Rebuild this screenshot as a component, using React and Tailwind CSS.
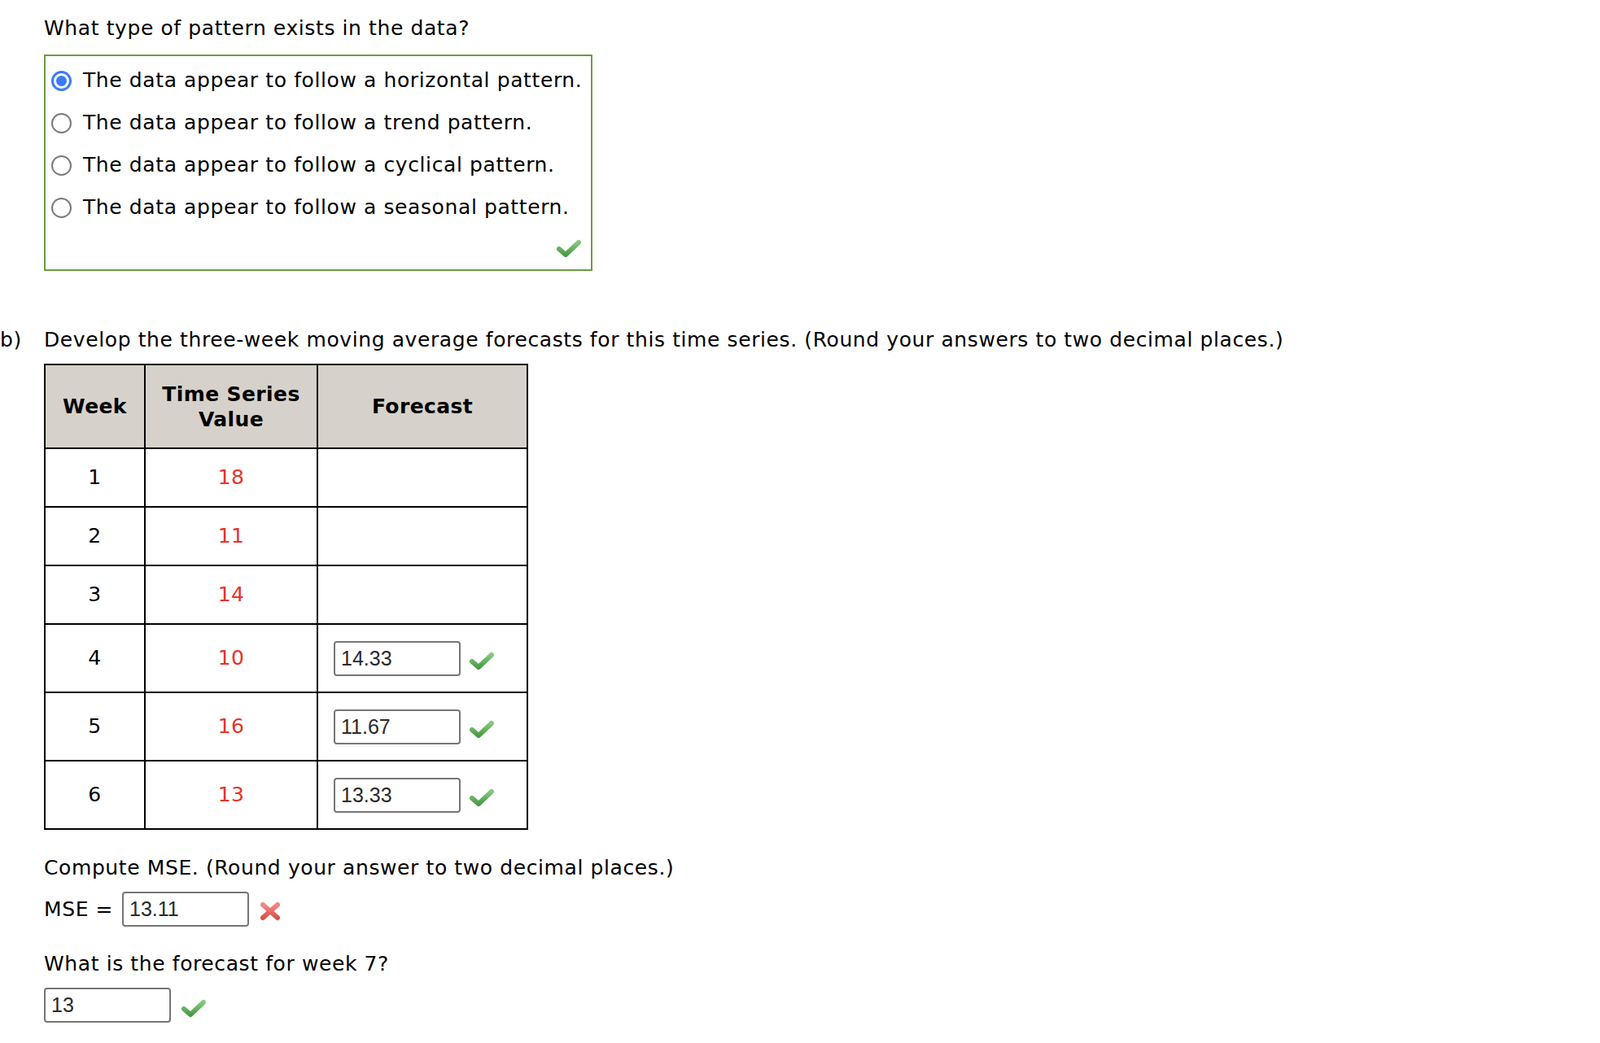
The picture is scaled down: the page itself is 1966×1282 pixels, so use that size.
import React from 'react';

const options = [
  'The data appear to follow a horizontal pattern.',
  'The data appear to follow a trend pattern.',
  'The data appear to follow a cyclical pattern.',
  'The data appear to follow a seasonal pattern.',
];

const rows = [
  { week: 1, value: 18, forecast: null },
  { week: 2, value: 11, forecast: null },
  { week: 3, value: 14, forecast: null },
  { week: 4, value: 10, forecast: '14.33' },
  { week: 5, value: 16, forecast: '11.67' },
  { week: 6, value: 13, forecast: '13.33' },
];

function Check() {
  return (
    <svg width="32" height="24" viewBox="0 0 32 24" className="shrink-0">
      <defs>
        <linearGradient id="chk" x1="0" y1="0" x2="0" y2="1">
          <stop offset="0" stopColor="#84c97c" />
          <stop offset="1" stopColor="#4c9a46" />
        </linearGradient>
      </defs>
      <path d="M4 13 L12 20 L28 5" fill="none" stroke="url(#chk)" strokeWidth="6" strokeLinecap="round" strokeLinejoin="round" />
    </svg>
  );
}

function Cross() {
  return (
    <svg width="28" height="26" viewBox="0 0 28 26" className="shrink-0">
      <defs>
        <linearGradient id="crs" x1="0" y1="0" x2="0" y2="1">
          <stop offset="0" stopColor="#f08a88" />
          <stop offset="1" stopColor="#dc4f4d" />
        </linearGradient>
      </defs>
      <path d="M5 5 L23 21 M23 5 L5 21" fill="none" stroke="url(#crs)" strokeWidth="6" strokeLinecap="round" />
    </svg>
  );
}

function Radio({ checked }) {
  if (checked) {
    return (
      <span className="w-[25px] h-[25px] rounded-full border-[3px] border-[#3b7cf4] flex items-center justify-center shrink-0">
        <span className="w-[13px] h-[13px] rounded-full bg-[#3b7cf4]" />
      </span>
    );
  }
  return <span className="w-[25px] h-[25px] rounded-full border-2 border-[#7a7a7a] bg-white shrink-0" />;
}

function Answer({ value }) {
  return (
    <input
      readOnly
      value={value}
      className="w-[156px] h-[43px] border-2 border-[#767676] rounded-[4px] px-[7px] text-[25px] tracking-normal text-[#2a2a2a] font-['Liberation_Sans',Arial,sans-serif] outline-none bg-white"
    />
  );
}

export default function App() {
  return (
    <div className="min-h-screen bg-white text-black font-['DejaVu_Sans',Verdana,sans-serif] text-[25px] leading-[30px] tracking-[0.6px] pt-[20px]">
      <div className="pl-[54px]">
        <p>What type of pattern exists in the data?</p>
        <div className="mt-[17px] w-[674px] border-2 border-[#6d9c40] pt-[4px] pb-[16px]">
          {options.map((opt, i) => (
            <div key={opt} className="h-[52px] flex items-center pl-[7px] gap-[14px]">
              <Radio checked={i === 0} />
              <span>{opt}</span>
            </div>
          ))}
          <div className="flex justify-end pr-[11px] mt-[12px] h-[22px]">
            <Check />
          </div>
        </div>
      </div>

      <div className="flex mt-[70px]">
        <span className="w-[54px] shrink-0">b)</span>
        <span>Develop the three-week moving average forecasts for this time series. (Round your answers to two decimal places.)</span>
      </div>

      <div className="pl-[54px]">
        <table className="mt-[14px] border-collapse border-2 border-black tracking-[0.4px]">
          <thead>
            <tr className="bg-[#d6d2cb]">
              <th className="border-2 border-black w-[123px] h-[103px] font-bold">Week</th>
              <th className="border-2 border-black w-[212px] font-bold leading-[31px]">
                Time Series
                <br />
                Value
              </th>
              <th className="border-2 border-black w-[258px] font-bold">Forecast</th>
            </tr>
          </thead>
          <tbody>
            {rows.map((r) => (
              <tr key={r.week} className={r.forecast ? 'h-[84px]' : 'h-[72px]'}>
                <td className="border-2 border-black text-center">{r.week}</td>
                <td className="border-2 border-black text-center text-[#e6332a]">{r.value}</td>
                <td className="border-2 border-black pl-[19px]">
                  {r.forecast && (
                    <div className="flex items-center gap-[10px]">
                      <Answer value={r.forecast} />
                      <span className="mt-[6px]">
                        <Check />
                      </span>
                    </div>
                  )}
                </td>
              </tr>
            ))}
          </tbody>
        </table>

        <p className="mt-[32px]">Compute MSE. (Round your answer to two decimal places.)</p>
        <div className="mt-[14px] flex items-center">
          <span className="w-[96px]">MSE =</span>
          <Answer value="13.11" />
          <span className="ml-[12px] mt-[4px]">
            <Cross />
          </span>
        </div>

        <p className="mt-[31px]">What is the forecast for week 7?</p>
        <div className="mt-[14px] flex items-center gap-[12px]">
          <Answer value="13" />
          <span className="mt-[6px]">
            <Check />
          </span>
        </div>
      </div>
    </div>
  );
}
